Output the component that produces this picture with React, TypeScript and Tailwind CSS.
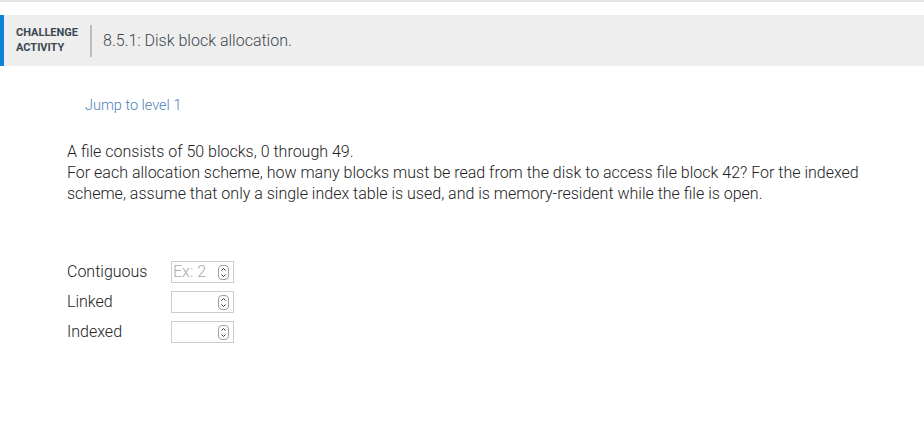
import React from "react";

const font = { fontFamily: "Roboto, 'Liberation Sans', sans-serif" };

function NumberField({ placeholder }: { placeholder?: string }) {
  return (
    <div className="relative h-[22px] w-[63px] border border-[#cccccc] bg-white">
      {placeholder && (
        <span className="absolute left-[1px] top-[1px] text-[16px] font-light leading-[18px] text-[#aaaaaa]">{placeholder}</span>
      )}
      {/* spinner */}
      <svg className="absolute right-[4px] top-[3px]" width="11" height="15" viewBox="0 0 11 15" fill="none">
        <rect x="0.5" y="0.5" width="10" height="14" rx="3.5" stroke="#a0a0a0" />
        <path d="M3.5 5.5 L5.5 3.5 L7.5 5.5" stroke="#333" strokeWidth="1" />
        <path d="M3.5 9.5 L5.5 11.5 L7.5 9.5" stroke="#333" strokeWidth="1" />
      </svg>
    </div>
  );
}

const rows = [
  { label: "Contiguous", placeholder: "Ex: 2" },
  { label: "Linked" },
  { label: "Indexed" },
];

export default function App() {
  return (
    <div className="min-h-[444px] w-full bg-white" style={font}>
      <div className="h-[2px] bg-[#e2e2e2]" />
      <div className="mt-[13px] flex h-[51px] items-center border-l-4 border-[#0b84d8] bg-[#eeeeee]">
        <div className="w-[74px] pl-[12px] text-[11px] font-bold leading-[15px] text-[#3b4650]">
          <div className="-mt-[2px]">CHALLENGE</div>
          <div>ACTIVITY</div>
        </div>
        <div className="ml-[12px] h-[32px] w-[2px] bg-[#bbbbbb]" />
        <div className="ml-[11px] text-[16px] font-light text-[#3c4750]">8.5.1: Disk block allocation.</div>
      </div>

      <div className="pl-[85px] pt-[30px] text-[14.5px] font-light leading-[20px] text-[#4f81b8]">Jump to level 1</div>

      <div className="pl-[67px] pr-[40px] pt-[25px] text-[16px] font-light leading-[21px] text-[#222222]">
        <p>A file consists of 50 blocks, 0 through 49.</p>
        <p>
          For each allocation scheme, how many blocks must be read from the disk to access file block 42? For the indexed
          scheme, assume that only a single index table is used, and is memory-resident while the file is open.
        </p>
      </div>

      <div className="flex flex-col gap-[8px] pl-[67px] pt-[57px]">
        {rows.map((r) => (
          <div key={r.label} className="flex items-center">
            <span className="w-[104px] text-[16px] font-light leading-[22px] text-[#222222]">{r.label}</span>
            <NumberField placeholder={r.placeholder} />
          </div>
        ))}
      </div>
    </div>
  );
}
